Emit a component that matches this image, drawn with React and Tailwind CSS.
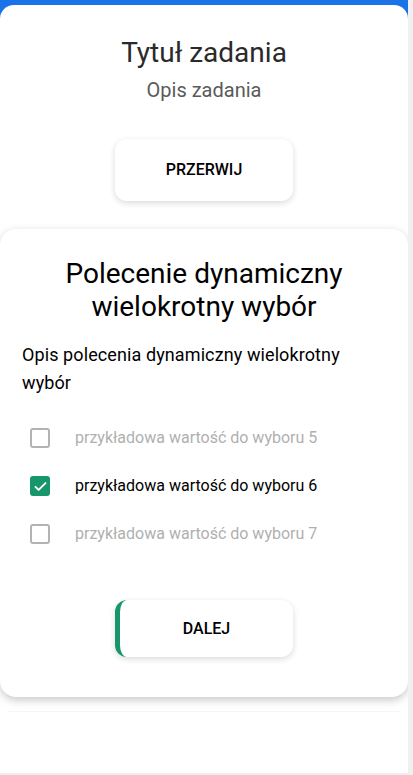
import React, { useState } from "react";

const options = [
  { id: 5, label: "przykładowa wartość do wyboru 5" },
  { id: 6, label: "przykładowa wartość do wyboru 6" },
  { id: 7, label: "przykładowa wartość do wyboru 7" },
];

function App() {
  const [selected, setSelected] = useState([6]);

  const toggle = (id) => {
    setSelected((s) => (s.includes(id) ? s.filter((x) => x !== id) : [...s, id]));
  };

  return (
    <div
      className="w-[413px] h-[775px] bg-white overflow-hidden flex"
      style={{ fontFamily: "Roboto, 'Noto Sans', sans-serif" }}
    >
      <div className="w-[408px] flex flex-col">
        <div className="bg-[#1a73e8] pt-[5px]">
          <div className="bg-white rounded-t-[14px] flex flex-col items-center pt-[30px] pb-[28px]">
            <h1 className="text-[28px] leading-[36px] text-[#2a2a2a]">Tytuł zadania</h1>
            <p className="text-[20px] leading-[28px] text-[#5a5a5a] mt-[5px]">Opis zadania</p>
            <button className="mt-[35px] w-[178px] h-[62px] rounded-[12px] bg-white shadow-[0_2px_6px_rgba(0,0,0,0.15)] text-[16px] font-medium text-black">
              PRZERWIJ
            </button>
          </div>
        </div>

        <div className="bg-white rounded-[16px] shadow-[0_3px_8px_rgba(0,0,0,0.22)] px-[22px] pt-[28px] pb-[40px]">
          <h2 className="text-[28px] leading-[33px] text-black text-center">
            Polecenie dynamiczny wielokrotny wybór
          </h2>
          <p className="text-[18px] leading-[28px] tracking-[0.1px] text-black mt-[18px]">
            Opis polecenia dynamiczny wielokrotny wybór
          </p>
          <div className="mt-[17px] flex flex-col">
            {options.map((o) => {
              const on = selected.includes(o.id);
              return (
                <label key={o.id} className="h-[48px] flex items-center pl-[8px] cursor-pointer" onClick={() => toggle(o.id)}>
                  {on ? (
                    <span className="w-[20px] h-[20px] rounded-[3px] bg-[#16966a] flex items-center justify-center">
                      <svg width="15" height="15" viewBox="0 0 24 24" fill="none" stroke="white" strokeWidth="3" strokeLinecap="round" strokeLinejoin="round">
                        <path d="M4 12.5l5 5L20 6.5" />
                      </svg>
                    </span>
                  ) : (
                    <span className="w-[20px] h-[20px] rounded-[3px] border-2 border-[#b3b3b3]" />
                  )}
                  <span className={"ml-[25px] text-[16px] " + (on ? "text-black" : "text-[#b0b0b0]")}>{o.label}</span>
                </label>
              );
            })}
          </div>
          <div className="flex justify-center mt-[42px]">
            <button className="w-[178px] h-[57px] rounded-[12px] bg-white border-l-[5px] border-[#16966a] shadow-[0_2px_6px_rgba(0,0,0,0.15)] text-[16px] font-medium text-black">
              DALEJ
            </button>
          </div>
        </div>

        <div className="mt-[14px] h-[1px] bg-[#f6f6f6] mx-[8px]" />
        <div className="flex-1" />
        <div className="h-[2px] bg-[#eeeeee]" />
      </div>
      <div className="w-[5px] bg-[#f0f0f0]" />
    </div>
  );
}

export default App;
